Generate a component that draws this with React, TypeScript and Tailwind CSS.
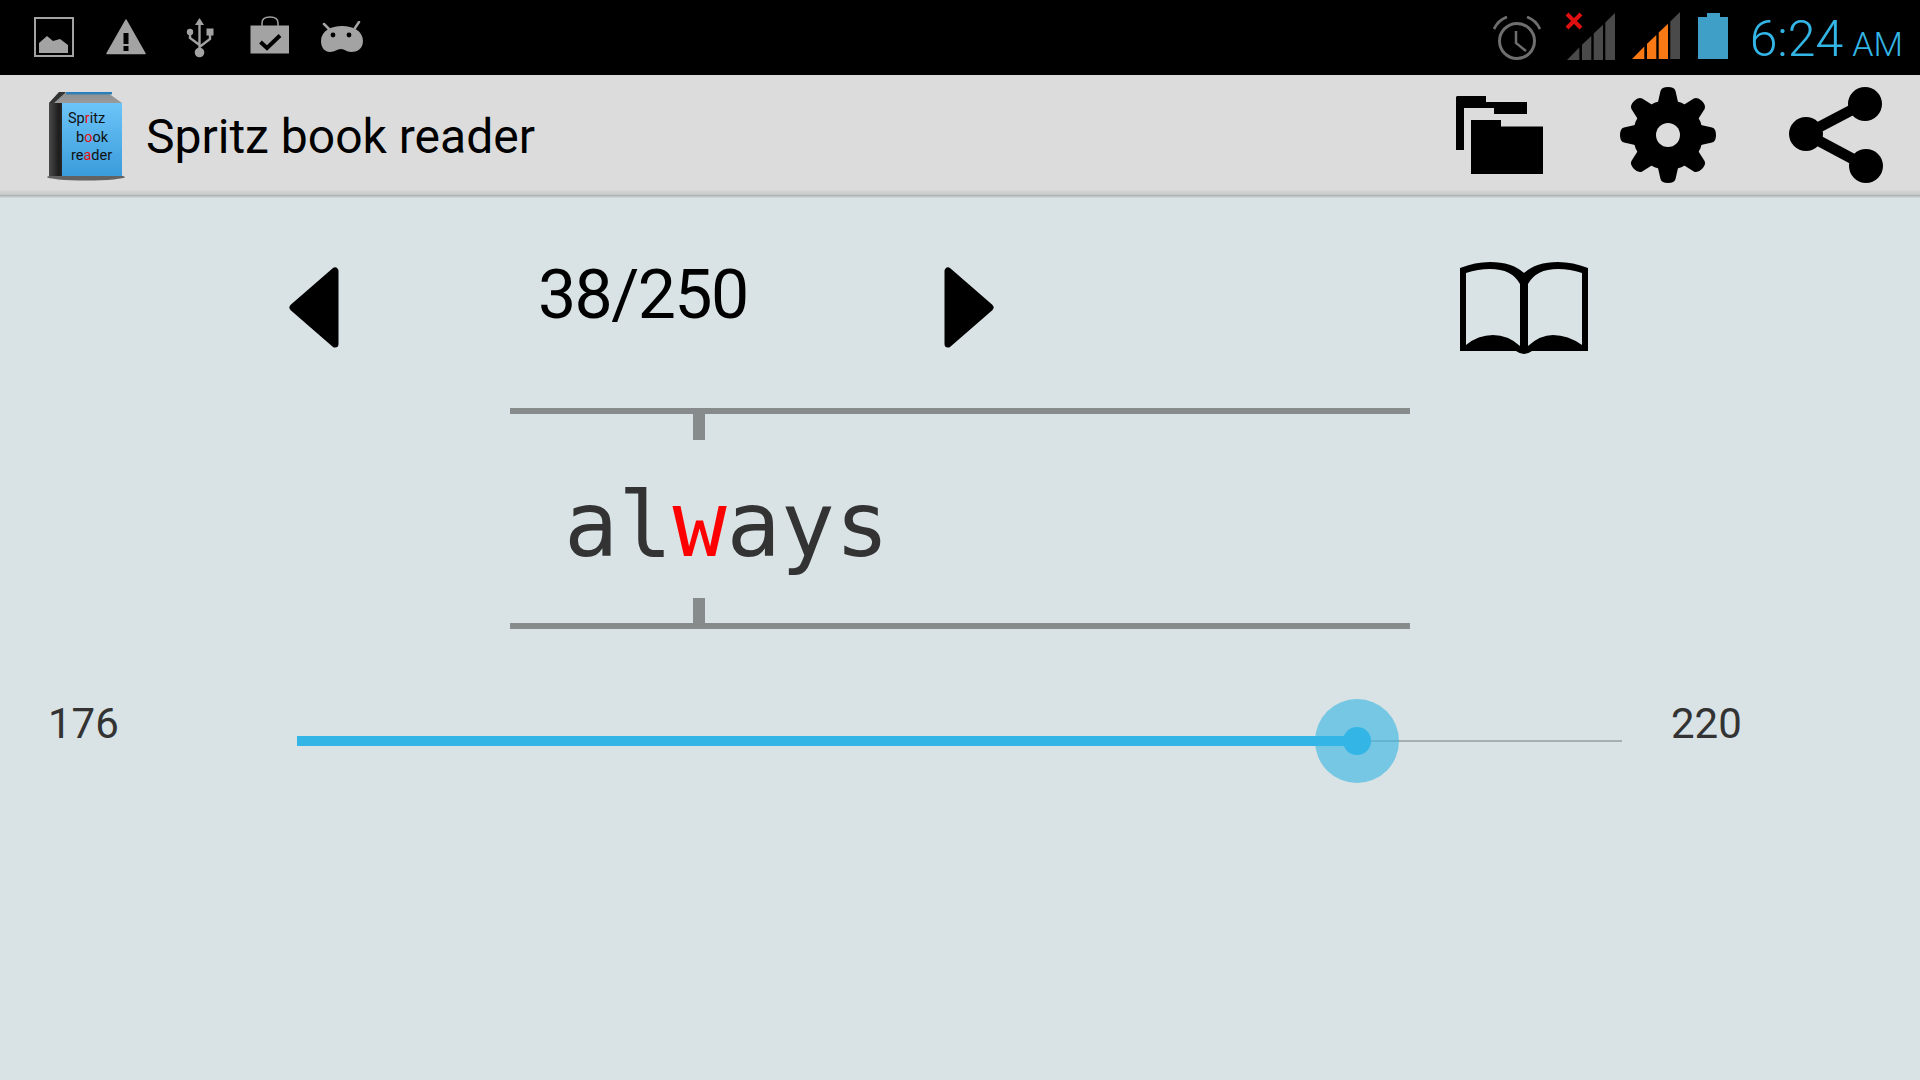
const GRAY = '#a3a3a3'

function ImageIcon() {
  return (
    <svg width="41" height="41" viewBox="0 0 41 41" className="ml-[34px] mt-[17px]">
      <rect x="1" y="1" width="38" height="38" fill="none" stroke={GRAY} strokeWidth="2" />
      <path d="M5 36V26L13 19L19 24L26 22L34 28V36Z" fill={GRAY} />
    </svg>
  )
}

function WarningIcon() {
  return (
    <svg width="40" height="36" viewBox="0 0 40 36" className="ml-[31px] mt-[19px]">
      <path d="M20 1L39 34.5H1Z" fill={GRAY} stroke={GRAY} strokeWidth="1.5" strokeLinejoin="round" />
      <rect x="17.5" y="14" width="5" height="11" fill="#000" />
      <rect x="17.5" y="27" width="5" height="5" fill="#000" />
    </svg>
  )
}

function UsbIcon() {
  return (
    <svg width="28" height="40" viewBox="0 0 28 40" className="ml-[40px] mt-[18px]">
      <path d="M13.5 0L18 7H9Z" fill={GRAY} />
      <path d="M13.5 6V32M4 16V20L13.5 27M24 16V21L13.5 29" fill="none" stroke={GRAY} strokeWidth="2.4" />
      <circle cx="13.5" cy="34.5" r="4.8" fill={GRAY} />
      <circle cx="4" cy="14" r="3.2" fill={GRAY} />
      <rect x="20.5" y="10.5" width="7" height="7" fill={GRAY} />
    </svg>
  )
}

function BagIcon() {
  return (
    <svg width="40" height="38" viewBox="0 0 40 38" className="ml-[36px] mt-[16px]">
      <path d="M12 10V7C12 3 15.5 1 20 1S28 3 28 7V10" fill="none" stroke={GRAY} strokeWidth="1.5" />
      <path d="M0.5 9.5H39V37.5H0.5Z" fill={GRAY} />
      <path d="M10.5 26L17 32L30 19.5" fill="none" stroke="#000" strokeWidth="4" />
    </svg>
  )
}

function AndroidIcon() {
  return (
    <svg width="44" height="32" viewBox="0 0 44 32" className="ml-[30px] mt-[21px]">
      <path d="M4 3L9 8M39 1L35 7" stroke={GRAY} strokeWidth="2.5" strokeLinecap="round" />
      <path d="M22 5C33 5 43 10 43 20C43 28 37 31 31 31C26 31 25 28 21 28C17 28 15 31 10 31C5 31 1 27 1 20C1 10 11 5 22 5Z" fill={GRAY} />
      <circle cx="13" cy="14" r="2.4" fill="#000" />
      <circle cx="29" cy="14" r="2.4" fill="#000" />
    </svg>
  )
}

function AlarmIcon() {
  return (
    <svg width="48" height="44" viewBox="0 0 48 44" className="mt-[16px]">
      <circle cx="24" cy="25" r="17.5" fill="none" stroke="#6e6e6e" strokeWidth="3" />
      <path d="M23 15V27L33 35" fill="none" stroke="#6e6e6e" strokeWidth="2.5" />
      <path d="M1 13C4 7 8 3 14 1M47 13C44 7 40 3 34 1" fill="none" stroke="#6e6e6e" strokeWidth="2.8" />
    </svg>
  )
}

// four bars under one diagonal, first `lit` of them coloured
function SignalIcon({ lit, cross, className }: { lit: number; cross?: boolean; className: string }) {
  const bars = [
    '0,47 12.3,34.5 12.3,47',
    '15,31.7 24.3,23 24.3,47 15,47',
    '26.7,20.5 36,11.8 36,47 26.7,47',
    '38.3,9.5 48,0 48,47 38.3,47',
  ]
  return (
    <svg width="48" height="47" viewBox="0 0 48 47" className={`overflow-visible ${className}`}>
      {bars.map((p, i) => (
        <polygon key={p} points={p} fill={i < lit ? '#f97a14' : '#4a4a4a'} />
      ))}
      {cross && <path d="M0 0L14 14M14 0L0 14" stroke="#e01010" strokeWidth="4" transform="translate(0 1)" />}
    </svg>
  )
}

function BatteryIcon() {
  return (
    <svg width="30" height="46" viewBox="0 0 30 46" className="ml-[18px] mt-[13px]">
      <path d="M9 0H22V4H30V46H0V4H9Z" fill="#3f9fc6" />
    </svg>
  )
}

function AppLogo() {
  return (
    <svg width="80" height="90" viewBox="0 0 80 90" className="ml-[46px] mt-[17px] shrink-0">
      <defs>
        <linearGradient id="cover" x1="0" y1="0" x2="0" y2="1">
          <stop offset="0" stopColor="#6cc4f8" />
          <stop offset="1" stopColor="#3a9cdb" />
        </linearGradient>
        <linearGradient id="pages" x1="0" y1="0" x2="0" y2="1">
          <stop offset="0" stopColor="#8f9091" />
          <stop offset="1" stopColor="#e4e4e4" />
        </linearGradient>
        <linearGradient id="spine" x1="0" y1="0" x2="1" y2="0">
          <stop offset="0" stopColor="#4a4a4a" />
          <stop offset="0.7" stopColor="#1c1c1c" />
          <stop offset="1" stopColor="#2c2c2c" />
        </linearGradient>
      </defs>
      <ellipse cx="40" cy="85" rx="39" ry="3.5" fill="#3a3a3a" opacity="0.75" />
      <path d="M3 11L13 1H62L76 11V84H16Z" fill="url(#pages)" />
      <path d="M3 11L13 0H20L8 11Z" fill="#333" />
      <rect x="20" y="0" width="46" height="2.4" fill="#2a7fb8" />
      <rect x="3" y="11" width="14" height="73" fill="url(#spine)" />
      <rect x="16" y="11" width="60" height="73" fill="url(#cover)" />
      <text x="22" y="31" fontFamily="Roboto, sans-serif" fontSize="14.5" fill="#111">
        Sp<tspan fill="#e81010">r</tspan>itz
      </text>
      <text x="30" y="50" fontFamily="Roboto, sans-serif" fontSize="14.5" fill="#111">
        b<tspan fill="#e81010">o</tspan>ok
      </text>
      <text x="25" y="68" fontFamily="Roboto, sans-serif" fontSize="14.5" fill="#111">
        re<tspan fill="#e81010">a</tspan>der
      </text>
    </svg>
  )
}

function FoldersIcon() {
  return (
    <svg width="87" height="78" viewBox="0 0 87 78">
      <path d="M1 0H30V6H71V18H38V12H8V54H0V1Z" fill="#000" />
      <path d="M15 24H45V30.5H87V78H15Z" fill="#000" />
    </svg>
  )
}

function GearIcon() {
  return (
    <svg width="96" height="96" viewBox="-48 -48 96 96" className="ml-[77px]">
      <circle r="35" fill="#000" />
      {[0, 45, 90, 135, 180, 225, 270, 315].map((a) => (
        <path key={a} d="M-10 -33L-7.5 -44Q-6.5 -48 0 -48Q6.5 -48 7.5 -44L10 -33Z" fill="#000" transform={`rotate(${a})`} />
      ))}
      <circle r="12" fill="#dcdcdc" />
    </svg>
  )
}

function ShareIcon() {
  return (
    <svg width="96" height="96" viewBox="0 0 96 96" className="ml-[72px]">
      <path d="M18 47L77 16M18 47L78 79" stroke="#000" strokeWidth="11" fill="none" />
      <circle cx="77" cy="17" r="17" fill="#000" />
      <circle cx="18" cy="47" r="17" fill="#000" />
      <circle cx="78" cy="79" r="17" fill="#000" />
    </svg>
  )
}

function OpenBookIcon() {
  return (
    <svg width="128" height="92" viewBox="0 0 128 92" className="ml-[466px] shrink-0">
      <path
        fillRule="evenodd"
        d="M0 6Q15 0 30 0Q52 0 64 11Q76 0 98 0Q113 0 128 6V89H72Q68 92 64 92Q60 92 56 89H0ZM6 11V83Q18 73 33 73Q48 73 60 84V22Q52 7 30 7Q18 7 6 11ZM68 22V84Q80 73 93 73Q108 73 122 83V11Q110 7 98 7Q76 7 68 22Z"
        fill="#000"
      />
    </svg>
  )
}

export default function App() {
  return (
    <div className="w-[1920px] h-[1080px] overflow-hidden bg-[#d9e2e4] flex flex-col font-['Roboto',sans-serif]">
      {/* Status bar */}
      <div className="h-[75px] bg-black flex items-start shrink-0">
        <ImageIcon />
        <WarningIcon />
        <UsbIcon />
        <BagIcon />
        <AndroidIcon />
        <div className="ml-auto flex items-start">
          <AlarmIcon />
          <SignalIcon lit={0} cross className="ml-[26px] mt-[13px]" />
          <SignalIcon lit={3} className="ml-[17px] mt-[12px]" />
          <BatteryIcon />
          <div className="ml-[22px] mr-[17px] mt-[11px] flex items-baseline text-[#33b5e5] font-light leading-[56px]">
            <span className="text-[50px]">6:24</span>
            <span className="text-[34px] ml-[9px]">AM</span>
          </div>
        </div>
      </div>

      {/* Action bar */}
      <div className="h-[115px] bg-[#dcdcdc] flex items-start shrink-0">
        <AppLogo />
        <span className="ml-[20px] mt-[29px] text-[48px] leading-[66px] text-black">Spritz book reader</span>
        <div className="ml-auto mr-[36px] flex items-center h-[96px] mt-[12px]">
          <FoldersIcon />
          <GearIcon />
          <ShareIcon />
        </div>
      </div>
      <div className="h-[5px] bg-linear-to-b from-[#d8d9d9] to-[#c4c6c6] shrink-0" />
      <div className="h-[3px] bg-linear-to-b from-[#a9adad] to-[#d5dddf] shrink-0" />

      {/* Page navigation */}
      <div className="mt-[64px] flex items-start h-[92px] shrink-0">
        <svg width="50" height="81" viewBox="0 0 50 81" className="ml-[289px] mt-[5px] shrink-0">
          <polygon points="46,4 46,77 4,40.5" fill="#000" stroke="#000" strokeWidth="7" strokeLinejoin="round" />
        </svg>
        <span className="ml-[199px] w-[209px] text-[68px] leading-[66px] tracking-[-1.6px] text-black">38/250</span>
        <svg width="50" height="81" viewBox="0 0 50 81" className="ml-[197px] mt-[5px] shrink-0">
          <polygon points="4,4 4,77 46,40.5" fill="#000" stroke="#000" strokeWidth="7" strokeLinejoin="round" />
        </svg>
        <OpenBookIcon />
      </div>

      {/* Reader window */}
      <div className="mt-[54px] ml-[510px] w-[900px] flex flex-col shrink-0">
        <div className="h-[6px] bg-[#888b8c]" />
        <div className="ml-[183px] w-3 h-[26px] bg-[#888b8c]" />
        <div className="h-[158px] pl-[54px] pt-[32px] font-['DejaVu_Sans_Mono',monospace] text-[90px] leading-[106px] text-[#333333]">
          al<span className="text-[#ff0000]">w</span>ays
        </div>
        <div className="ml-[183px] w-3 h-[25px] bg-[#888b8c]" />
        <div className="h-[6px] bg-[#888b8c]" />
      </div>

      {/* Speed slider */}
      <div className="mt-[70px] flex items-start shrink-0">
        <span className="ml-[48px] w-[249px] text-[42px] leading-[50px] text-[#333333]">176</span>
        <div className="relative w-[1325px] h-[84px] flex items-center">
          <div className="h-[10px] w-[1060px] bg-[#33b5e5]" />
          <div className="h-[2px] flex-1 bg-[#a5aeb0]" />
          <div className="absolute left-[1018px] top-0 w-[84px] h-[84px] rounded-full bg-[#33b5e5]/60 flex items-center justify-center">
            <div className="w-[28px] h-[28px] rounded-full bg-[#33b5e5]" />
          </div>
        </div>
        <span className="ml-[49px] text-[42px] leading-[50px] text-[#333333]">220</span>
      </div>
    </div>
  )
}
